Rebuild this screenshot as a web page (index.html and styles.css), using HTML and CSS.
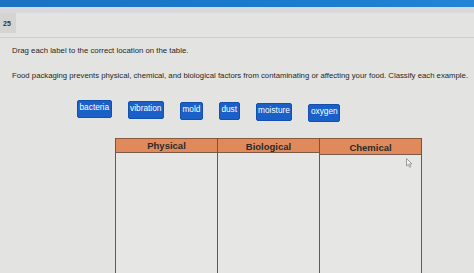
FILE: index.html
```html
<!DOCTYPE html>
<html>
<head>
<meta charset="utf-8">
<link rel="stylesheet" href="styles.css">
</head>
<body>
<div class="topbar"></div>
<div class="subbar"></div>
<div class="qhead"><span class="qnum">25</span></div>
<div class="content">
  <p class="instr">Drag each label to the correct location on the table.</p>
  <p class="prompt">Food packaging prevents physical, chemical, and biological factors from contaminating or affecting your food. Classify each example.</p>
  <div class="labels">
    <span class="label">bacteria</span>
    <span class="label">vibration</span>
    <span class="label">mold</span>
    <span class="label">dust</span>
    <span class="label">moisture</span>
    <span class="label">oxygen</span>
  </div>
  <div class="table">
    <div class="col"><div class="th">Physical</div><div class="td"></div></div>
    <div class="col"><div class="th">Biological</div><div class="td"></div></div>
    <div class="col"><div class="th">Chemical</div><div class="td"><svg class="cursor" width="7" height="10" viewBox="0 0 7 10"><path d="M0.5 0.5 L0.5 8 L2.3 6.3 L3.6 9.3 L4.8 8.8 L3.6 5.9 L6 5.9 Z" fill="#f2f2f2" stroke="#8a8a8a" stroke-width="0.8"/></svg></div></div>
  </div>
</div>
</body>
</html>
```
FILE: styles.css
```css
html, body {
  margin: 0;
  padding: 0;
}
body {
  width: 474px;
  height: 273px;
  overflow: hidden;
  background: #e3e4e1;
  font-family: "Liberation Sans", Arial, sans-serif;
  color: #262626;
}
.topbar {
  height: 7px;
  background: linear-gradient(to right, #1b73c2, #1a7ccc 60%, #2286d4);
}
.subbar {
  height: 6px;
  background: #d9d8dc;
}
.qhead {
  height: 24px;
  border-bottom: 1px solid #cfd0cd;
  display: flex;
}
.qnum {
  width: 16px;
  height: 20px;
  background: #d4d5d2;
  font-size: 7px;
  font-weight: bold;
  display: flex;
  align-items: center;
  padding-left: 3px;
  box-sizing: border-box;
  color: #333;
}
.content {
  padding: 0 0 0 12px;
}
.instr {
  margin: 8px 0 0 0;
  font-size: 7.8px;
  line-height: 10px;
}
.prompt {
  margin: 15px 0 0 0;
  font-size: 7.75px;
  line-height: 10px;
  white-space: nowrap;
}
.labels {
  display: flex;
  align-items: flex-start;
  gap: 16px;
  margin: 19px 0 0 65px;
}
.label {
  background: #1b5fc9;
  color: #fff;
  font-size: 8.3px;
  line-height: 10px;
  padding: 1px 1.5px 5px 1.5px;
  border-radius: 2px;
  border: 1px solid #1650ad;
}
.label:nth-child(2) { margin-top: 1px; }
.label:nth-child(3) { margin-top: 2px; }
.label:nth-child(4) { margin-top: 2px; }
.label:nth-child(5) { margin-top: 3px; }
.label:nth-child(6) { margin-top: 4px; }
.table {
  display: flex;
  margin: 16px 0 0 103px;
  width: 306px;
  border-left: 1.5px solid #5c5c5c;
}
.col {
  flex: 1;
  border-right: 1.5px solid #5c5c5c;
  display: flex;
  flex-direction: column;
}
.th {
  background: #e08a5b;
  border-top: 1px solid #8a5a40;
  border-bottom: 1px solid #7a5a48;
  height: 13px;
  font-size: 9.5px;
  font-weight: bold;
  color: #2a2a2a;
  text-align: center;
  line-height: 13px;
}
.col:nth-child(2) .th { line-height: 15px; }
.col:nth-child(3) .th { line-height: 17px; height: 15px; }
.td {
  height: 130px;
  background: #e6e6e4;
  position: relative;
}
.cursor {
  position: absolute;
  right: 8px;
  top: 3px;
}
```
